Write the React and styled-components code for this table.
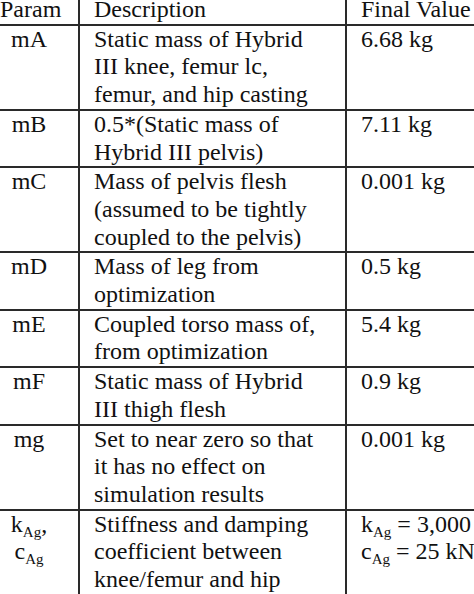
import React from 'react';
import styled, { createGlobalStyle } from 'styled-components';

const GlobalStyle = createGlobalStyle`
  html, body {
    margin: 0;
    padding: 0;
    background: #fff;
    overflow: hidden;
  }
`;

const Page = styled.div`
  width: 474px;
  height: 594px;
  overflow: hidden;
  font-family: "Liberation Serif", "Times New Roman", serif;
  font-size: 24px;
  color: #111;
`;

const Table = styled.div`
  margin-top: -4px;
  display: flex;
  flex-direction: column;
`;

const Row = styled.div`
  display: grid;
  grid-template-columns: 80px 267px 1fr;
  border-bottom: 2px solid #2a2a2a;
  &:last-child {
    border-bottom: none;
  }
`;

const Cell = styled.div`
  line-height: 27.7px;
  white-space: nowrap;
  overflow: hidden;
  padding-left: ${({ $first }) => ($first ? '0' : '14px')};
  padding-right: ${({ $first }) => ($first ? '20px' : '0')};
  text-align: ${({ $first }) => ($first ? 'center' : 'left')};
  border-right: ${({ $last }) => ($last ? 'none' : '2px solid #2a2a2a')};
`;

const Sub = styled.sub`
  font-size: 15px;
  line-height: 0;
  vertical-align: -5px;
`;

const Lines = ({ lines }) =>
  lines.map((l, i) => (
    <React.Fragment key={i}>
      {i > 0 && <br />}
      {l}
    </React.Fragment>
  ));

const rows = [
  {
    param: ['mA'],
    desc: ['Static mass of Hybrid', 'III knee, femur lc,', 'femur, and hip casting'],
    value: ['6.68 kg'],
  },
  {
    param: ['mB'],
    desc: ['0.5*(Static mass of', 'Hybrid III pelvis)'],
    value: ['7.11 kg'],
  },
  {
    param: ['mC'],
    desc: ['Mass of pelvis flesh', '(assumed to be tightly', 'coupled to the pelvis)'],
    value: ['0.001 kg'],
  },
  {
    param: ['mD'],
    desc: ['Mass of leg from', 'optimization'],
    value: ['0.5 kg'],
  },
  {
    param: ['mE'],
    desc: ['Coupled torso mass of,', 'from optimization'],
    value: ['5.4 kg'],
  },
  {
    param: ['mF'],
    desc: ['Static mass of Hybrid', 'III thigh flesh'],
    value: ['0.9 kg'],
  },
  {
    param: ['mg'],
    desc: ['Set to near zero so that', 'it has no effect on', 'simulation results'],
    value: ['0.001 kg'],
  },
  {
    param: [
      <>k<Sub>Ag</Sub>,</>,
      <>c<Sub>Ag</Sub></>,
    ],
    desc: ['Stiffness and damping', 'coefficient between', 'knee/femur and hip'],
    value: [
      <>k<Sub>Ag</Sub> = 3,000 kN/m</>,
      <>c<Sub>Ag</Sub> = 25 kNs/m</>,
    ],
  },
];

const App = () => (
  <Page>
    <GlobalStyle />
    <Table>
      <Row>
        <Cell $first>Param</Cell>
        <Cell>Description</Cell>
        <Cell $last>Final Value</Cell>
      </Row>
      {rows.map((r, i) => (
        <Row key={i}>
          <Cell $first>
            <Lines lines={r.param} />
          </Cell>
          <Cell>
            <Lines lines={r.desc} />
          </Cell>
          <Cell $last>
            <Lines lines={r.value} />
          </Cell>
        </Row>
      ))}
    </Table>
  </Page>
);

export default App;
